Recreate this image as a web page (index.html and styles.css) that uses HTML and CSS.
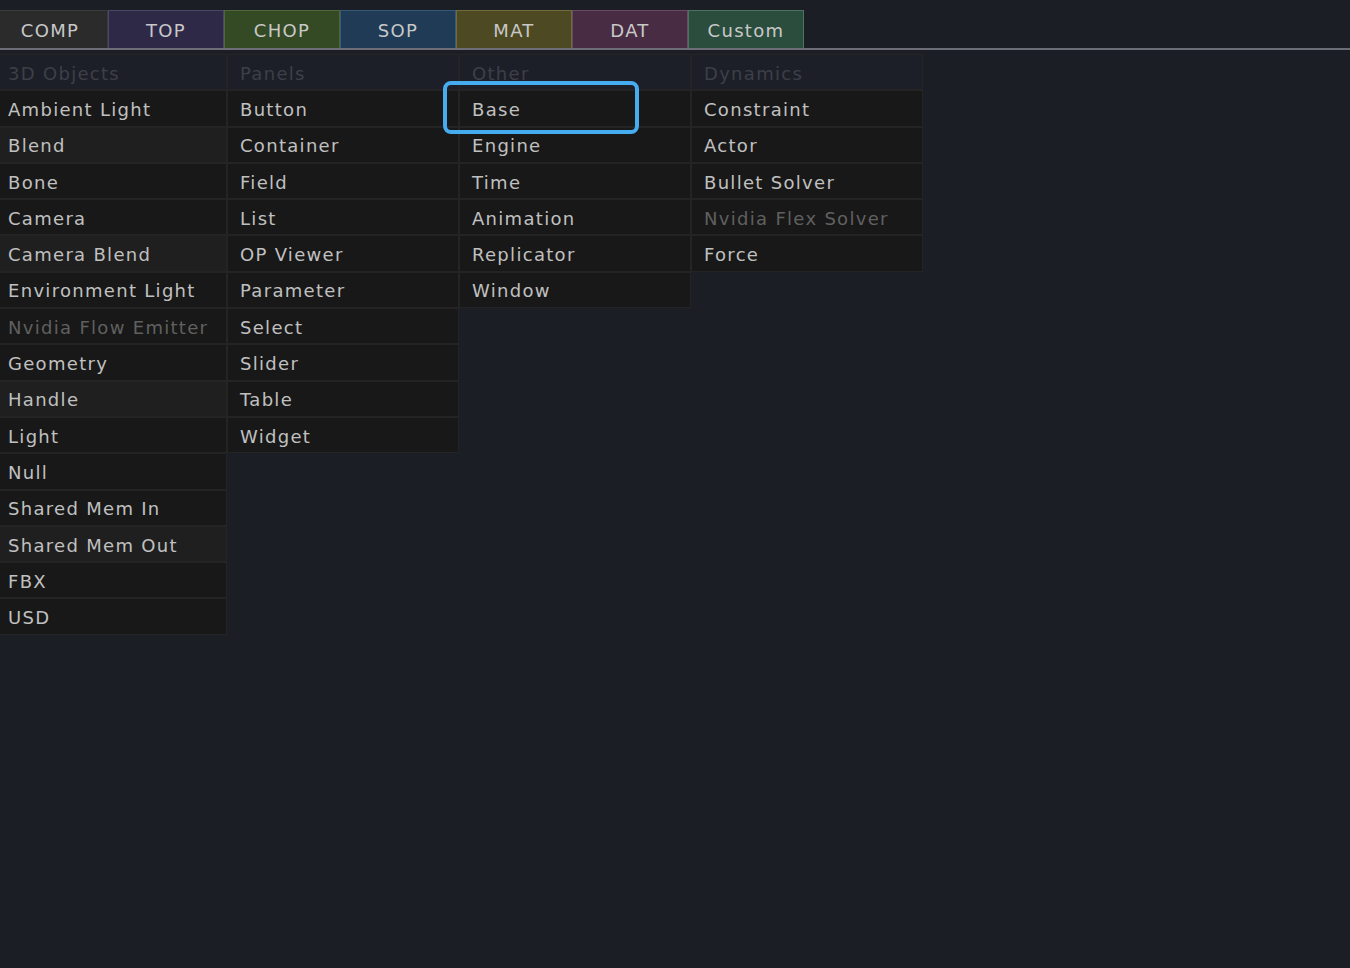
FILE: index.html
```html
<!DOCTYPE html>
<html>

<head>
    <meta charset="UTF-8">
    <title>OP Create - COMP</title>
    <link rel="stylesheet" href="styles.css">
</head>

<body>
    <div class="tab-bar">
        <div class="tab tab-comp">COMP</div>
        <div class="tab tab-top">TOP</div>
        <div class="tab tab-chop">CHOP</div>
        <div class="tab tab-sop">SOP</div>
        <div class="tab tab-mat">MAT</div>
        <div class="tab tab-dat">DAT</div>
        <div class="tab tab-custom">Custom</div>
    </div>

    <div class="menu">
        <div class="column">
            <div class="cell header">3D Objects</div>
            <div class="cell">Ambient Light</div>
            <div class="cell alt">Blend</div>
            <div class="cell">Bone</div>
            <div class="cell">Camera</div>
            <div class="cell alt">Camera Blend</div>
            <div class="cell">Environment Light</div>
            <div class="cell disabled">Nvidia Flow Emitter</div>
            <div class="cell">Geometry</div>
            <div class="cell alt">Handle</div>
            <div class="cell">Light</div>
            <div class="cell">Null</div>
            <div class="cell">Shared Mem In</div>
            <div class="cell alt">Shared Mem Out</div>
            <div class="cell">FBX</div>
            <div class="cell">USD</div>
        </div>
        <div class="column">
            <div class="cell header">Panels</div>
            <div class="cell">Button</div>
            <div class="cell">Container</div>
            <div class="cell">Field</div>
            <div class="cell">List</div>
            <div class="cell">OP Viewer</div>
            <div class="cell">Parameter</div>
            <div class="cell">Select</div>
            <div class="cell">Slider</div>
            <div class="cell">Table</div>
            <div class="cell">Widget</div>
        </div>
        <div class="column">
            <div class="cell header">Other</div>
            <div class="cell selected">Base<div class="focus-ring"></div></div>
            <div class="cell">Engine</div>
            <div class="cell">Time</div>
            <div class="cell">Animation</div>
            <div class="cell">Replicator</div>
            <div class="cell">Window</div>
        </div>
        <div class="column">
            <div class="cell header">Dynamics</div>
            <div class="cell">Constraint</div>
            <div class="cell">Actor</div>
            <div class="cell">Bullet Solver</div>
            <div class="cell disabled">Nvidia Flex Solver</div>
            <div class="cell">Force</div>
        </div>
    </div>
</body>

</html>
```

FILE: styles.css
```css
body {
    margin: 0;
    width: 1350px;
    height: 968px;
    overflow: hidden;
    background: #1c1e26;
    font-family: "DejaVu Sans", Verdana, sans-serif;
    font-size: 18px;
    letter-spacing: 1.3px;
    color: #c0c0c0;
}

.tab-bar {
    display: flex;
    margin-top: 10px;
    margin-left: -8px;
    border-bottom: 2px solid #6b6e76;
}

.tab {
    width: 116px;
    height: 38px;
    box-sizing: border-box;
    border: 1px solid;
    border-bottom: none;
    display: flex;
    align-items: center;
    justify-content: center;
    padding-top: 2px;
    color: #c8c8c8;
}

.tab-comp {
    background: #2b2b2b;
    border-color: #3a3a3a;
}

.tab-top {
    background: #2e2947;
    border-color: #4d4766;
}

.tab-chop {
    background: #334a24;
    border-color: #4f673c;
}

.tab-sop {
    background: #1f3b56;
    border-color: #375a78;
}

.tab-mat {
    background: #4d4923;
    border-color: #716c3b;
}

.tab-dat {
    background: #482c43;
    border-color: #694b63;
}

.tab-custom {
    background: #2b4d3d;
    border-color: #4b735f;
}

.menu {
    display: flex;
    align-items: flex-start;
    margin-top: 4px;
    margin-left: -5px;
}

.column {
    width: 232px;
    box-sizing: border-box;
    display: flex;
    flex-direction: column;
    gap: 2px;
    padding: 1px;
    background: #242424;
}

.cell {
    position: relative;
    height: 34.3px;
    box-sizing: border-box;
    display: flex;
    align-items: center;
    padding-left: 12px;
    padding-top: 2px;
    background: #181818;
    white-space: nowrap;
}

.cell.header {
    background: #1d1f28;
    color: #3c3f47;
}

.cell.alt {
    background: #1f1f1f;
}

.cell.disabled {
    color: #606060;
}

.focus-ring {
    position: absolute;
    z-index: 1;
    left: -17px;
    top: -10px;
    width: 196px;
    height: 53px;
    box-sizing: border-box;
    border: 4px solid #45acf0;
    border-radius: 8px;
}
```
